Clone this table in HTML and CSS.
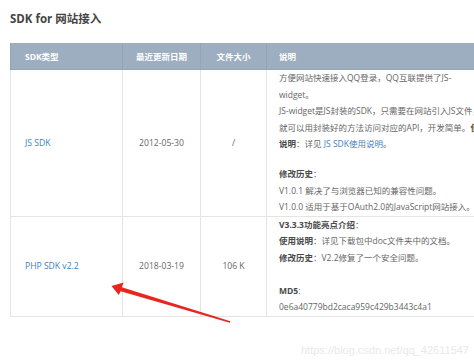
FILE: index.html
```html
<!DOCTYPE html>
<html lang="zh-CN">
<head>
<meta charset="utf-8">
<title>SDK for 网站接入</title>
<link rel="stylesheet" href="styles.css">
</head>
<body>
<div class="page">
  <h2 class="title">SDK for 网站接入</h2>
  <table class="sdk">
    <colgroup>
      <col class="c-type">
      <col class="c-date">
      <col class="c-size">
      <col class="c-desc">
    </colgroup>
    <thead>
      <tr>
        <th class="left">SDK类型</th>
        <th>最近更新日期</th>
        <th>文件大小</th>
        <th class="left desc-head">说明</th>
      </tr>
    </thead>
    <tbody>
      <tr>
        <td class="left"><a class="link" href="#">JS SDK</a></td>
        <td>2012-05-30</td>
        <td>/</td>
        <td class="desc">
          <div>方便网站快速接入QQ登录，QQ互联提供了JS-<br>widget。<br>JS-widget是JS封装的SDK，只需要在网站引入JS文件，<br>就可以用封装好的方法访问对应的API，开发简单。<b>使用</b><br><b>说明</b>：详见 <a class="link" href="#">JS SDK使用说明</a>。</div>
          <div class="blank short"></div>
          <div><b>修改历史</b>：<br>V1.0.1 解决了与浏览器已知的兼容性问题。<br>V1.0.0 适用于基于OAuth2.0的JavaScript网站接入。</div>
        </td>
      </tr>
      <tr>
        <td class="left"><a class="link" href="#">PHP SDK v2.2</a></td>
        <td>2018-03-19</td>
        <td>106 K</td>
        <td class="desc">
          <div><b>V3.3.3功能亮点介绍</b>：<br><b>使用说明</b>：详见下载包中doc文件夹中的文档。<br><b>修改历史</b>：V2.2修复了一个安全问题。</div>
          <div class="blank"></div>
          <div><b>MD5</b>:<br>0e6a40779bd2caca959c429b3443c4a1</div>
        </td>
      </tr>
    </tbody>
  </table>
</div>
<svg class="arrow" width="474" height="363" viewBox="0 0 474 363" aria-hidden="true">
  <polygon points="111.5,286 123.6,282.4 121.8,287.2 230.4,321.3 229.8,322.8 120.6,291.3 118.8,295" fill="#e8261f"/>
</svg>
<div class="watermark">https://blog.csdn.net/qq_42611547</div>
</body>
</html>
```

FILE: styles.css
```css
html, body {
  margin: 0;
  padding: 0;
  width: 474px;
  height: 363px;
  overflow: hidden;
  background: #ffffff;
}

body {
  position: relative;
  font-family: "Open Sans", "Noto Sans CJK SC", sans-serif;
  color: #666666;
}

.page {
  padding-left: 10px;
}

.title {
  margin: 0;
  height: 43px;
  line-height: 38px;
  font-size: 11.5px;
  font-weight: 700;
  color: #444444;
}

.sdk {
  border-collapse: collapse;
  table-layout: fixed;
  width: 480px;
}

.c-type { width: 112px; }
.c-date { width: 78px; }
.c-size { width: 66px; }
.c-desc { width: 224px; }

.sdk th {
  height: 26px;
  padding: 0;
  background: #9daec0;
  color: #ffffff;
  font-size: 8.5px;
  font-weight: 700;
  text-align: center;
  vertical-align: middle;
  border: 1px solid #93a4b6;
  border-top: none;
}

.sdk td {
  padding: 0;
  border: 1px solid #e4e4e4;
  font-size: 8.6px;
  color: #666666;
  text-align: center;
  vertical-align: middle;
}

.sdk th.left,
.sdk td.left {
  text-align: left;
  padding-left: 14px;
}

.sdk th.desc-head {
  padding-left: 12px;
}

.sdk td.desc {
  text-align: left;
  padding: 0 12px;
  font-size: 8.5px;
  line-height: 16.5px;
  white-space: nowrap;
  color: #666666;
}

.desc b {
  font-weight: 700;
  color: #4a4a4a;
}

.blank {
  height: 16.5px;
}

.blank.short {
  height: 13.5px;
}

.link {
  color: #3d7fc2;
  text-decoration: none;
}

.arrow {
  position: absolute;
  left: 0;
  top: 0;
  pointer-events: none;
}

.watermark {
  position: absolute;
  left: 301px;
  top: 343px;
  font-family: "Liberation Sans", Arial, sans-serif;
  font-size: 11px;
  line-height: 14px;
  color: #e9e9e9;
  white-space: nowrap;
}
```
